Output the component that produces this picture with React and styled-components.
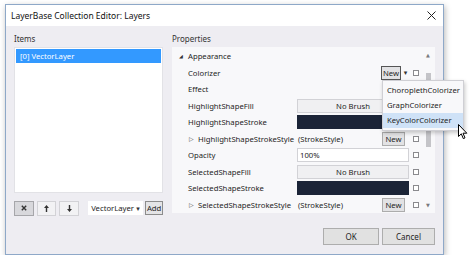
import React from 'react';
import styled, { createGlobalStyle } from 'styled-components';

const GlobalStyle = createGlobalStyle`
	body {
		margin: 0;
		background: #ffffff;
		font-family: 'Noto Sans', 'DejaVu Sans', sans-serif;
		font-size: 7.7px;
		color: #1e1e1e;
	}
`;

const props = [
	{ name: 'Colorizer', kind: 'colorizer' },
	{ name: 'Effect', kind: 'empty' },
	{ name: 'HighlightShapeFill', kind: 'brush' },
	{ name: 'HighlightShapeStroke', kind: 'dark' },
	{ name: 'HighlightShapeStrokeStyle', kind: 'style', expand: true },
	{ name: 'Opacity', kind: 'text', value: '100%' },
	{ name: 'SelectedShapeFill', kind: 'brush' },
	{ name: 'SelectedShapeStroke', kind: 'dark' },
	{ name: 'SelectedShapeStrokeStyle', kind: 'style', expand: true },
];

const menuItems = ['ChoroplethColorizer', 'GraphColorizer', 'KeyColorColorizer'];

const Value = ({ item }) => {
	switch (item.kind) {
		case 'colorizer':
			return (
				<ValueCell>
					<Spacer />
					<SmallButton $focused>New</SmallButton>
					<DropArrow>▾</DropArrow>
				</ValueCell>
			);
		case 'brush':
			return <ValueBox $center>No Brush</ValueBox>;
		case 'dark':
			return <ValueBox $dark />;
		case 'style':
			return (
				<ValueCell>
					<StyleText>(StrokeStyle)</StyleText>
					<Spacer />
					<SmallButton $wide>New</SmallButton>
				</ValueCell>
			);
		case 'text':
			return <ValueBox $white>{item.value}</ValueBox>;
		default:
			return <ValueCell />;
	}
};

export default function App() {
	return (
		<>
			<GlobalStyle />
			<Page>
				<Dialog>
					<TitleBar>
						<span>LayerBase Collection Editor: Layers</span>
						<svg width="9" height="9" viewBox="0 0 9 9">
							<path d="M0.5 0.5 L8.5 8.5 M8.5 0.5 L0.5 8.5" stroke="#222" strokeWidth="1" />
						</svg>
					</TitleBar>
					<Body>
						<Columns>
							<LeftCol>
								<Label>Items</Label>
								<List>
									<ListItem $selected>[0] VectorLayer</ListItem>
								</List>
								<ButtonRow>
									<ToolButton $pressed>
										<svg width="6" height="6" viewBox="0 0 6 6">
											<path d="M0.8 0.8 L5.2 5.2 M5.2 0.8 L0.8 5.2" stroke="#333" strokeWidth="1.4" />
										</svg>
									</ToolButton>
									<ToolButton>
										<svg width="5" height="7" viewBox="0 0 5 7">
											<path d="M2.5 0 L5 3 L3.2 3 L3.2 7 L1.8 7 L1.8 3 L0 3 Z" fill="#333" />
										</svg>
									</ToolButton>
									<ToolButton>
										<svg width="5" height="7" viewBox="0 0 5 7">
											<path d="M2.5 7 L5 4 L3.2 4 L3.2 0 L1.8 0 L1.8 4 L0 4 Z" fill="#333" />
										</svg>
									</ToolButton>
									<TypeSelect>
										<span>VectorLayer</span>
										<DropArrow>▾</DropArrow>
									</TypeSelect>
									<AddButton>Add</AddButton>
								</ButtonRow>
							</LeftCol>
							<RightCol>
								<Label>Properties</Label>
								<Grid>
									<Rows>
										<Row>
											<CategoryName>
												<Corner>◢</Corner>
												Appearance
											</CategoryName>
										</Row>
										{props.map((p) => (
											<Row key={p.name}>
												<PropName $expand={p.expand}>
													{p.expand && <Expander>▷</Expander>}
													{p.name}
												</PropName>
												<Value item={p} />
												<CheckCell>
													{p.kind !== 'empty' && <Check />}
												</CheckCell>
											</Row>
										))}
									</Rows>
									<ScrollBar>
										<ScrollArrow>▲</ScrollArrow>
										<Thumb />
										<Spacer />
										<ScrollArrow>▼</ScrollArrow>
									</ScrollBar>
								</Grid>
							</RightCol>
						</Columns>
						<Footer>
							<DialogButton $width={54}>OK</DialogButton>
							<DialogButton $width={51}>Cancel</DialogButton>
						</Footer>
					</Body>
					<Menu>
						{menuItems.map((m, i) => (
							<MenuItem key={m} $active={i === 2}>
								{m}
							</MenuItem>
						))}
					</Menu>
					<Cursor width="10" height="16" viewBox="0 0 10 16">
						<path
							d="M0.5 0.5 L0.5 12.5 L3.3 9.8 L5.3 14.6 L7 13.9 L5 9.2 L8.8 9.2 Z"
							fill="#fff"
							stroke="#000"
							strokeWidth="1"
							strokeLinejoin="round"
						/>
					</Cursor>
				</Dialog>
			</Page>
		</>
	);
}

const Page = styled.div`
	padding: 4px 0 0 5px;
`;

const Dialog = styled.div`
	position: relative;
	width: 437px;
	height: 249px;
	border: 1px solid #8ea8c8;
	background: #eeedf2;
	box-shadow: 1px 2px 6px rgba(0, 0, 0, 0.28);
	display: flex;
	flex-direction: column;
`;

const TitleBar = styled.div`
	height: 21px;
	background: #ffffff;
	display: flex;
	align-items: center;
	justify-content: space-between;
	padding: 0 7px 0 5px;
	font-size: 8.5px;
	color: #111;
`;

const Body = styled.div`
	flex: 1;
	padding: 5px 8px 0 8px;
	display: flex;
	flex-direction: column;
`;

const Columns = styled.div`
	display: flex;
	gap: 9px;
`;

const LeftCol = styled.div`
	width: 149px;
	display: flex;
	flex-direction: column;
`;

const RightCol = styled.div`
	width: 263px;
	display: flex;
	flex-direction: column;
`;

const Label = styled.div`
	height: 16px;
	line-height: 16px;
	font-size: 8px;
	color: #333;
`;

const List = styled.div`
	height: 144px;
	background: #fff;
	border: 1px solid #e2e2e6;
	padding: 0 1px;
`;

const ListItem = styled.div`
	height: 14px;
	line-height: 14px;
	margin-top: 1px;
	padding-left: 4px;
	background: ${(p) => (p.$selected ? '#3399ff' : 'transparent')};
	color: ${(p) => (p.$selected ? '#fff' : '#222')};
`;

const ButtonRow = styled.div`
	margin-top: 8px;
	display: flex;
	align-items: center;
	height: 14px;
`;

const ToolButton = styled.div`
	width: 19px;
	height: 13px;
	margin-right: 3px;
	display: flex;
	align-items: center;
	justify-content: center;
	background: ${(p) => (p.$pressed ? '#d8d8dc' : '#f2f2f4')};
	border: 1px solid ${(p) => (p.$pressed ? '#a6a6aa' : '#d2d2d6')};
`;

const TypeSelect = styled.div`
	margin-left: 6px;
	width: 55px;
	height: 14px;
	background: #fff;
	display: flex;
	align-items: center;
	justify-content: space-between;
	padding: 0 1px 0 3px;
	box-sizing: border-box;
`;

const AddButton = styled.div`
	margin-left: 2px;
	width: 17px;
	height: 12px;
	border: 1px solid #8c8c8c;
	background: #e4e4e6;
	display: flex;
	align-items: center;
	justify-content: center;
`;

const Grid = styled.div`
	height: 166px;
	background: #f8f8fa;
	display: flex;
`;

const Rows = styled.div`
	width: 249px;
	padding-top: 1px;
`;

const Row = styled.div`
	height: 16.5px;
	display: grid;
	grid-template-columns: 125px 113px 11px;
	align-items: center;
`;

const CategoryName = styled.div`
	grid-column: 1 / 3;
	padding-left: 7px;
	display: flex;
	align-items: center;
`;

const Corner = styled.span`
	font-size: 5px;
	width: 9px;
	color: #333;
`;

const PropName = styled.div`
	padding-left: ${(p) => (p.$expand ? '17px' : '16px')};
	display: flex;
	align-items: center;
	white-space: nowrap;
	overflow: hidden;
`;

const Expander = styled.span`
	font-size: 6px;
	width: 9px;
	color: #444;
`;

const ValueCell = styled.div`
	height: 14px;
	display: flex;
	align-items: center;
`;

const ValueBox = styled.div`
	height: 12px;
	margin-right: 1px;
	border: 1px solid ${(p) => (p.$dark ? '#1b2437' : '#d2d2d6')};
	background: ${(p) => (p.$dark ? '#1b2437' : p.$white ? '#ffffff' : '#f0f0f2')};
	line-height: 12px;
	text-align: ${(p) => (p.$center ? 'center' : 'left')};
	padding-left: ${(p) => (p.$center ? '0' : '2px')};
`;

const StyleText = styled.span`
	padding-left: 1px;
`;

const Spacer = styled.div`
	flex: 1;
`;

const SmallButton = styled.div`
	width: ${(p) => (p.$wide ? '21px' : '18px')};
	height: 12px;
	margin-right: ${(p) => (p.$wide ? '5px' : '0')};
	border: 1px solid ${(p) => (p.$focused ? '#555' : '#acacac')};
	background: #e2e2e4;
	display: flex;
	align-items: center;
	justify-content: center;
`;

const DropArrow = styled.span`
	font-size: 7px;
	width: 9px;
	text-align: center;
	color: #333;
`;

const CheckCell = styled.div`
	display: flex;
	justify-content: center;
`;

const Check = styled.div`
	width: 4px;
	height: 4px;
	border: 1px solid #8a8a8e;
	background: #fff;
`;

const ScrollBar = styled.div`
	width: 14px;
	display: flex;
	flex-direction: column;
	align-items: center;
	padding: 4px 0 4px;
	box-sizing: border-box;
`;

const ScrollArrow = styled.div`
	font-size: 5px;
	height: 8px;
	line-height: 8px;
	color: #7a7a7e;
`;

const Thumb = styled.div`
	width: 5px;
	height: 74px;
	margin-top: 14px;
	background: #c4c4c8;
`;

const Footer = styled.div`
	margin-top: 13px;
	display: flex;
	justify-content: flex-end;
	gap: 3px;
`;

const DialogButton = styled.div`
	width: ${(p) => p.$width}px;
	height: 15px;
	border: 1px solid #adadad;
	background: #e1e1e1;
	display: flex;
	align-items: center;
	justify-content: center;
	font-size: 8px;
`;

const Menu = styled.div`
	position: absolute;
	left: 376px;
	top: 75px;
	width: 80px;
	padding: 2px 0;
	background: #f8f8fa;
	border: 1px solid #cfcfd4;
	box-shadow: 1px 2px 4px rgba(0, 0, 0, 0.22);
`;

const MenuItem = styled.div`
	height: 15px;
	line-height: 15px;
	padding-left: 4px;
	white-space: nowrap;
	background: ${(p) => (p.$active ? '#cfe2f7' : 'transparent')};
`;

const Cursor = styled.svg`
	position: absolute;
	left: 452px;
	top: 119px;
`;
